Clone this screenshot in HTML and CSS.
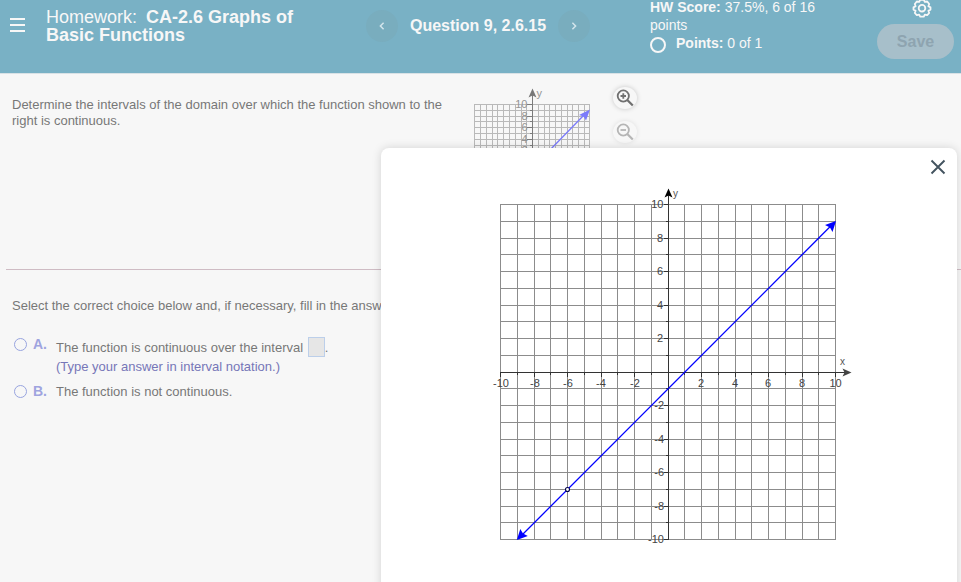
FILE: index.html
```html
<!DOCTYPE html>
<html lang="en">

<head>
    <meta charset="UTF-8">
    <meta name="viewport" content="width=device-width, initial-scale=1.0">
    <title>Homework: CA-2.6 Graphs of Basic Functions</title>
    <link rel="stylesheet" href="styles.css">
</head>

<body>
    <header class="header">
        <svg class="menu-icon" width="15" height="14" viewBox="0 0 15 14">
            <path d="M0 1H15M0 7H15M0 13H15" stroke="#f7f7f7" stroke-width="2" />
        </svg>
        <h1 class="title">Homework: &nbsp;<b>CA-2.6 Graphs of Basic Functions</b></h1>
        <nav class="question-nav">
            <button class="nav-button">
                <svg width="6" height="8" viewBox="0 0 6 8"><path d="M4.6 .8L1.4 4L4.6 7.2" /></svg>
            </button>
            <span class="question">Question 9, 2.6.15</span>
            <button class="nav-button">
                <svg width="6" height="8" viewBox="0 0 6 8"><path d="M1.4 .8L4.6 4L1.4 7.2" /></svg>
            </button>
        </nav>
        <div class="score">
            <div><b>HW Score:</b> 37.5%, 6 of 16 points</div>
            <div class="points"><span class="points-ring"></span><span><b>Points:</b> 0 of 1</span></div>
        </div>
        <div class="actions">
            <svg class="gear" width="20" height="20" viewBox="0 0 20 20">
                <path d="M8.2 1.8H11.8L12.8 3.9L15.2 3.5L17.2 6L16.4 8.2L18.5 9.4V11.6L16.4 12.8L17.2 15L15.2 17.2L12.8 16.6L11.8 18.6H8.2L7.2 16.6L4.8 17.2L2.8 15L3.6 12.8L1.5 11.6V9.4L3.6 8.2L2.8 6L4.8 3.5L7.2 3.9Z" />
                <circle cx="10" cy="10.2" r="3.3" />
            </svg>
            <button class="save">Save</button>
        </div>
    </header>

    <main>
        <section class="problem">
            <p class="prompt">Determine the intervals of the domain over which the function shown to the right is continuous.</p>
            <svg class="thumbnail" width="130" height="140" viewBox="470 84 130 140">
                <path class="thumb-grid" d="M474.5 104V221M480.5 104V221M486.5 104V221M492.5 104V221M497.5 104V221M503.5 104V221M509.5 104V221M515.5 104V221M521.5 104V221M526.5 104V221M532.5 104V221M538.5 104V221M544.5 104V221M549.5 104V221M555.5 104V221M561.5 104V221M567.5 104V221M572.5 104V221M578.5 104V221M584.5 104V221M589.5 104V221M474 104.5H590M474 110.5H590M474 116.5H590M474 121.5H590M474 127.5H590M474 133.5H590M474 139.5H590M474 145.5H590M474 150.5H590" />
                <path class="thumb-axis" d="M532.5 94V221M527 104.5H533M530 110.5H533M527 116.5H533M530 121.5H533M527 127.5H533M530 133.5H533M527 139.5H533M530 145.5H533" />
                <path d="M532.5 88.5L536.5 97.5L532.5 95.5L528.5 97.5Z" fill="#777" />
                <g class="thumb-label" text-anchor="end">
                    <text x="527.5" y="108">10</text>
                    <text x="527.5" y="120">8</text>
                    <text x="527.5" y="131">6</text>
                    <text x="527.5" y="143">4</text>
                    <text x="527.5" y="154">2</text>
                </g>
                <text class="thumb-label" x="536.5" y="97">y</text>
                <path d="M548 152L584 115" stroke="#7b7bfb" stroke-width="1.3" />
                <path d="M590 109.5L586 120.5L583.5 116.5L579 115Z" fill="#7b7bfb" />
            </svg>
            <div class="zoom-tools">
                <button class="zoom-button">
                    <svg width="18" height="18" viewBox="0 0 18 18">
                        <circle cx="7.3" cy="7" r="5.6" />
                        <path d="M4.5 7H10M7.3 4.2V9.8" />
                        <path d="M11.3 11L16.8 16.5" stroke-width="2.2" />
                    </svg>
                </button>
                <button class="zoom-button disabled">
                    <svg width="18" height="18" viewBox="0 0 18 18">
                        <circle cx="7.3" cy="7" r="5.6" />
                        <path d="M4.5 7H10" />
                        <path d="M11.3 11L16.8 16.5" stroke-width="2.2" />
                    </svg>
                </button>
            </div>
        </section>

        <section class="choices">
            <p class="instruction">Select the correct choice below and, if necessary, fill in the answer box to complete your choice.</p>
            <div class="choice">
                <span class="radio"></span>
                <span class="letter">A.</span>
                <div class="choice-text first">
                    <div class="answer-line">The function is continuous over the interval <span class="blank"></span>.</div>
                    <div class="hint">(Type your answer in interval notation.)</div>
                </div>
            </div>
            <div class="choice">
                <span class="radio"></span>
                <span class="letter">B.</span>
                <div class="choice-text">The function is not continuous.</div>
            </div>
        </section>
    </main>

    <div class="modal">
        <button class="close">
            <svg width="16" height="16" viewBox="0 0 16 16"><path d="M1.5 1.5L14.5 14.5M14.5 1.5L1.5 14.5" /></svg>
        </button>
        <svg class="graph" width="380" height="370" viewBox="481 180 380 370">
            <path class="grid" d="M500.5 204V540M517.5 204V540M534.5 204V540M550.5 204V540M567.5 204V540M584.5 204V540M601.5 204V540M617.5 204V540M634.5 204V540M651.5 204V540M684.5 204V540M701.5 204V540M718.5 204V540M735.5 204V540M751.5 204V540M768.5 204V540M785.5 204V540M802.5 204V540M818.5 204V540M835.5 204V540" />
            <path class="grid" d="M500 204.5H836M500 221.5H836M500 238.5H836M500 254.5H836M500 271.5H836M500 288.5H836M500 305.5H836M500 321.5H836M500 338.5H836M500 355.5H836M500 388.5H836M500 405.5H836M500 422.5H836M500 439.5H836M500 455.5H836M500 472.5H836M500 489.5H836M500 506.5H836M500 522.5H836M500 539.5H836" />
            <path class="axis" d="M668.5 194V540M500 372.5H846" />
            <!-- ticks -->
            <path class="axis" d="M664 204.5H669M666 221.5H669M664 238.5H669M666 254.5H669M664 271.5H669M666 288.5H669M664 305.5H669M666 321.5H669M664 338.5H669M666 355.5H669M666 388.5H669M664 405.5H669M666 422.5H669M664 439.5H669M666 455.5H669M664 472.5H669M666 489.5H669M664 506.5H669M666 522.5H669M664 539.5H669" />
            <path class="axis" d="M500.5 372V377M517.5 372V375M534.5 372V377M550.5 372V375M567.5 372V377M584.5 372V375M601.5 372V377M617.5 372V375M634.5 372V377M651.5 372V375M684.5 372V375M701.5 372V377M718.5 372V375M735.5 372V377M751.5 372V375M768.5 372V377M785.5 372V375M802.5 372V377M818.5 372V375M835.5 372V377" />
            <path d="M668.5 188.5L672.5 197.5L668.5 195.5L664.5 197.5Z" fill="#000" />
            <path d="M851.5 372.5L842.5 376.5L844.5 372.5L842.5 368.5Z" fill="#444" />
            <g class="label" text-anchor="end">
                <text x="663.5" y="208">10</text>
                <text x="663" y="242">8</text>
                <text x="663" y="275">6</text>
                <text x="663" y="309">4</text>
                <text x="663" y="342">2</text>
                <text x="664" y="409">-2</text>
                <text x="664" y="443">-4</text>
                <text x="664" y="476">-6</text>
                <text x="664" y="510">-8</text>
                <text x="664" y="543">-10</text>
            </g>
            <g class="label" text-anchor="middle">
                <text x="501" y="387">-10</text>
                <text x="535" y="387">-8</text>
                <text x="568" y="387">-6</text>
                <text x="601" y="387">-4</text>
                <text x="635" y="387">-2</text>
                <text x="701" y="387">2</text>
                <text x="735" y="387">4</text>
                <text x="768" y="387">6</text>
                <text x="802" y="387">8</text>
                <text x="835.5" y="387">10</text>
            </g>
            <text class="axis-name" x="673" y="197">y</text>
            <text class="axis-name" x="840" y="365">x</text>
            <path d="M521 536L831 225.8" stroke="#0000ff" stroke-width="1.3" />
            <path d="M836 221L832.5 232L830 227.5L825 225Z" fill="#0000ff" />
            <path d="M516.8 540L520.3 529L523 533.5L527.8 536Z" fill="#0000ff" />
            <circle cx="567.5" cy="489.5" r="2" fill="#fff" stroke="#00004a" stroke-width="1.1" />
        </svg>
    </div>
</body>

</html>
```

FILE: styles.css
```css
body {
    margin: 0;
    height: 582px;
    overflow: hidden;
    position: relative;
    font-family: "Liberation Sans", Arial, sans-serif;
    font-size: 13px;
    color: #777;
    background-color: #f7f7f7;
}

button {
    border: none;
    padding: 0;
    font-family: inherit;
    cursor: pointer;
}

svg {
    display: block;
    fill: none;
    flex-shrink: 0;
}

p {
    margin: 0;
}

.header {
    display: flex;
    align-items: flex-start;
    height: 73px;
    box-sizing: border-box;
    padding-left: 10px;
    color: #f7f7f7;
    background-color: #79b1c5;
    box-shadow: 0 1px 0 #d9e2e6;
}

.menu-icon {
    margin-top: 18px;
}

.title {
    width: 270px;
    margin: 8px 0 0 21px;
    font-size: 18px;
    font-weight: normal;
    line-height: 18px;
}

.title b {
    margin-left: -1px;
}

.question-nav {
    display: flex;
    align-items: center;
    width: 224px;
    margin: 10px 0 0 50px;
    justify-content: space-between;
}

.nav-button {
    display: flex;
    align-items: center;
    justify-content: center;
    width: 32px;
    height: 32px;
    border-radius: 50%;
    background-color: #79adbe;
}

.nav-button svg {
    stroke: #d3e5ec;
    stroke-width: 1.5;
}

.question {
    font-size: 16px;
    font-weight: bold;
}

.score {
    width: 180px;
    margin: -2px 0 0 60px;
    font-size: 14px;
    line-height: 18px;
}

.points {
    display: flex;
    gap: 10px;
}

.points-ring {
    width: 12px;
    height: 12px;
    margin-top: 3px;
    border: 2px solid #f7f7f7;
    border-radius: 50%;
}

.actions {
    display: flex;
    flex-direction: column;
    align-items: center;
    width: 77px;
    margin-left: 47px;
}

.gear {
    margin: -2px 0 6px 13px;
    stroke: #f7f7f7;
    stroke-width: 1.8;
    stroke-linejoin: round;
}

.save {
    width: 77px;
    height: 35px;
    border-radius: 18px;
    font-size: 16px;
    font-weight: bold;
    color: #8ea4b0;
    background-color: #a7bfca;
}

.problem {
    display: flex;
    height: 196px;
    margin-left: 6px;
    padding-left: 6px;
    border-bottom: 1px solid #cfbcc4;
    overflow: hidden;
}

.prompt {
    width: 436px;
    margin-top: 24px;
    line-height: 16px;
}

.thumbnail {
    margin: 11px 0 0 22px;
}

.thumb-grid {
    stroke: #b9b9b9;
    shape-rendering: crispEdges;
}

.thumb-axis {
    stroke: #7b7b7b;
    shape-rendering: crispEdges;
}

.thumb-label {
    font-size: 11px;
    fill: #949494;
}

.zoom-tools {
    display: flex;
    flex-direction: column;
    gap: 12px;
    margin: 14px 0 0 13px;
}

.zoom-button {
    display: flex;
    align-items: center;
    justify-content: center;
    width: 24px;
    height: 22px;
    border-radius: 50%;
    background-color: #f7f7f7;
    box-shadow: 0 0 5px rgba(0, 0, 0, 0.2);
}

.zoom-button svg {
    stroke: #707070;
    stroke-width: 1.8;
}

.zoom-button.disabled {
    box-shadow: 0 0 5px rgba(0, 0, 0, 0.1);
}

.zoom-button.disabled svg {
    stroke: #b5b5b5;
}

.choices {
    padding: 28px 12px 0;
}

.instruction {
    margin-bottom: 21px;
    line-height: 16px;
}

.choice {
    display: flex;
    margin-bottom: 6px;
}

.radio {
    width: 11px;
    height: 11px;
    margin: 3px 6px 0 2px;
    border: 1px solid #98a4df;
    border-radius: 50%;
}

.letter {
    width: 23px;
    font-size: 14px;
    font-weight: bold;
    line-height: 18px;
    color: #9fa4df;
}

.choice-text {
    line-height: 19px;
}

.choice-text.first {
    padding-top: 3px;
}

.answer-line {
    display: flex;
    white-space: pre;
}

.blank {
    width: 15px;
    height: 18px;
    margin: -1px 0 0 1px;
    border: 1px solid #bccfea;
    background-color: #e6e6e6;
}

.answer-line,
.hint {
    height: 19px;
}

.hint {
    color: #7676b8;
}

.modal {
    position: absolute;
    left: 381px;
    top: 148px;
    width: 576px;
    height: 450px;
    border-radius: 8px 8px 0 0;
    background-color: #fff;
    box-shadow: 0 0 10px rgba(0, 0, 0, 0.15);
}

.close {
    display: block;
    margin: 11px 11px 0 auto;
    background: none;
}

.close svg {
    stroke: #43535f;
    stroke-width: 1.9;
}

.graph {
    margin: 5px 0 0 100px;
}

.grid {
    stroke: #8c8c8c;
    shape-rendering: crispEdges;
}

.axis {
    stroke: #333;
    shape-rendering: crispEdges;
}

.label {
    font-size: 11px;
    fill: #444;
}

.axis-name {
    font-size: 10px;
    fill: #555;
}
```
